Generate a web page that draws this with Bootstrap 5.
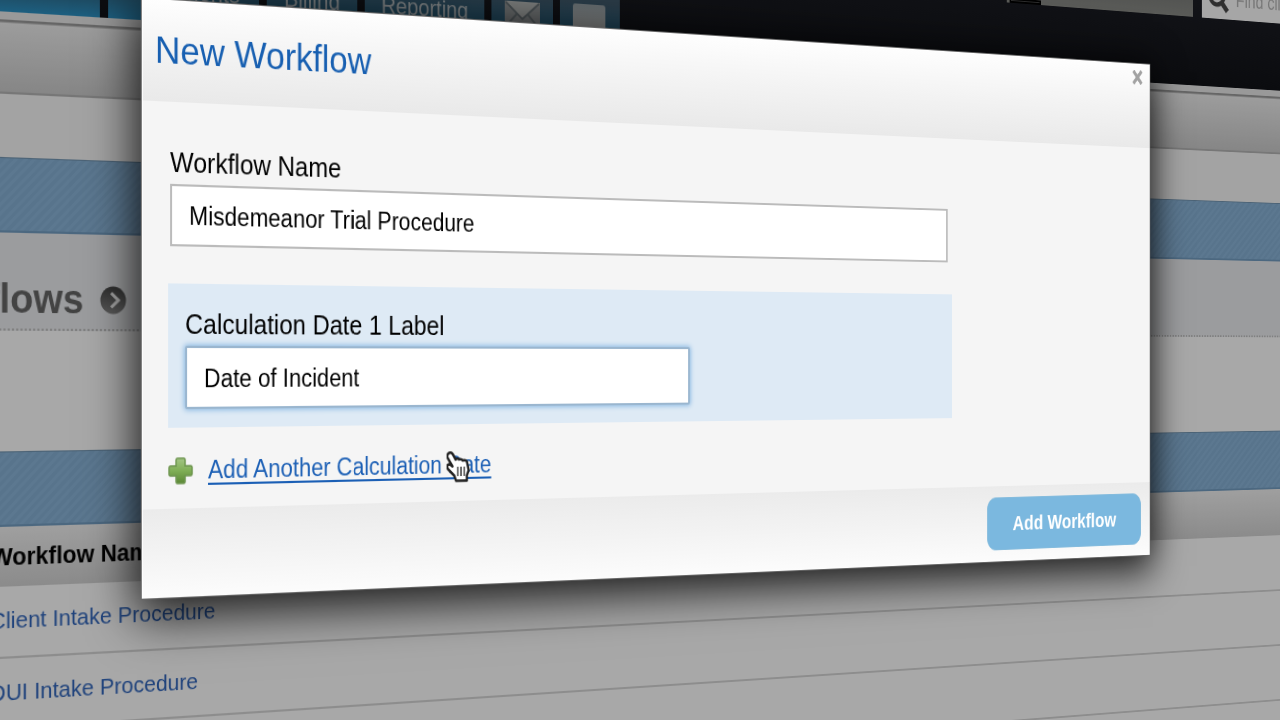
<!DOCTYPE html>
<html lang="en">
<head>
<meta charset="utf-8">
<meta name="viewport" content="width=device-width, initial-scale=1">
<title>New Workflow</title>
<link href="https://cdn.jsdelivr.net/npm/bootstrap@5.3.0/dist/css/bootstrap.min.css" rel="stylesheet">
<style>
  body { font-family: "Liberation Sans", Arial, sans-serif; background: #a8a8a8; color: #000; }

  /* The whole application lies on one plane that turns away to the right. */
  .stage { height: 100vh; perspective: 3234px; perspective-origin: 50% 50%; }
  .plane { width: 135vw; height: 120vh; margin: -10vh 0 0 -15vw; transform-origin: 65vw 50%; transform: rotateY(33deg); background: #a8a8a8; }

  /* Dimmed page */
  .topbar { height: 123px; background: linear-gradient(#14151a, #0b0c0f); }
  .tabs { gap: 8px; padding-left: 100px; }
  .tab { height: 57px; padding: 0 18px; font-size: 22px; color: #85898b; background: linear-gradient(#2b3c48 20%, #1f4356 60%, #1d5f80); text-decoration: none; }
  .tab-wide { width: 151px; }
  .tab-icon { padding: 0 15px; width: 70px; }
  .tools { gap: 13px; height: 46px; width: 424px; }
  .timer { width: 270px; background: linear-gradient(#4a4b4a, #5a5b58); }
  .timer span { width: 44px; height: 5px; margin-left: 4px; background: #2c2c2c; border: 2px solid #000; }
  .finder { width: 300px; padding-left: 8px; gap: 10px; background: #a6a6a6; margin-right: -160px; }
  .finder input { background: transparent; border: 0; padding: 0; font-size: 22px; width: 220px; color: #777; }
  .finder input::placeholder { color: #777; }
  .ribbon { height: 73px; border-top: 7px solid #999; border-bottom: 2px solid #777; background: linear-gradient(#666 0 2px, #9c9c9c 3px, #868686); }
  .spacer { height: 56px; background: #a3a3a3; }
  .band { height: 67px; border-top: 1px solid #4c6376; border-bottom: 2px solid #4c6880; background: repeating-linear-gradient(135deg, #5c7890 0 3px, #58748c 3px 6px); }
  .section { height: 87px; padding: 32px 0 0 54px; gap: 16px; background: #9b9c9e; border-bottom: 2px dotted #808080; }
  .section h2 { font-size: 36px; line-height: 42px; font-weight: 700; color: #434343; }
  .gap-lg { height: 107px; background: #a8a8a8; }
  .list { --bs-table-bg: transparent; }
  .list th { height: 53px; font-size: 22px; line-height: 24px; padding: 0 0 0 147px; vertical-align: middle; border: 0; background: linear-gradient(#9f9f9f, #8b8b8b); color: #000; }
  .list td { height: 63px; font-size: 21px; line-height: 24px; padding: 0 0 2px 146px; vertical-align: middle; border-bottom: 2px solid #8d8d8d; background: #a8a8a8; }
  .list a { color: #20437c; text-decoration: none; }

  /* Dialog */
  .overlay { padding: 103px 12.7% 0 16.9%; }
  .dialog { background: #f5f5f5; border-left: 1px solid #fff; box-shadow: 0 0 0 1px #666, 0 10px 44px 5px rgba(0,0,0,.88); }
  .dialog-head { height: 93px; padding: 19px 10px 0 12px; background: linear-gradient(#fefefe, #f3f3f3 50%, #e9e9e9); }
  .dialog-head h1 { font-size: 35px; line-height: 54px; color: #175fb1; font-weight: 400; }
  .shut { width: 16px; height: 16px; margin-top: -12px; line-height: 0; }
  .dialog-body { padding: 40px 280px 20px 25px; }
  .dialog-body label { font-size: 25px; line-height: 30px; margin-bottom: 5px; }
  .entry { height: 57px; border: 2px solid #bbb; border-radius: 0; padding: 2px 17px 0; font-size: 23px; color: #000; background: #fff; }
  .entry-on { width: 557px; height: 58px; border-color: #9ab6cf; border-radius: 2px; box-shadow: 0 0 5px 1px #8ab8e2; }
  .name-row { padding: 0 6px 0 2px; margin-bottom: 34px; }
  .date-box { background: #deeaf5; padding: 22px 17px 17px; margin-bottom: 24px; }
  .add-row { gap: 15px; font-size: 23px; line-height: 30px; }
  .add-row a { color: #1b5fb5; text-underline-offset: 4px; text-decoration-thickness: 2px; }
  .pointer { right: 24px; top: 2px; }
  .dialog-foot { height: 81px; padding: 0 13px; background: linear-gradient(#ebebeb, #f3f3f3 50%, #fcfcfc); }
  .go { width: 219px; height: 57px; border-radius: 12px; font-size: 22px; font-weight: 700; background: #7bb8df; color: #fff; border: 1px solid #86bcdd; padding: 0; }
</style>
</head>
<body class="overflow-hidden">
<div class="stage overflow-hidden">
  <div class="plane position-relative overflow-hidden">

    <header class="topbar d-flex justify-content-between align-items-end">
      <nav class="tabs d-flex">
        <a href="#" class="tab d-flex align-items-center tab-wide" aria-label="Activities"></a>
        <a href="#" class="tab d-flex align-items-center justify-content-center tab-wide">Documents</a>
        <a href="#" class="tab d-flex align-items-center">Billing</a>
        <a href="#" class="tab d-flex align-items-center">Reporting</a>
        <a href="#" class="tab tab-icon d-flex align-items-center" aria-label="Messages">
          <svg width="40" height="28" viewBox="0 0 40 28"><path fill="#66696a" d="M0 1h40v26H0z"/><path fill="#7d7f7e" d="M1 1h38L20 17z"/><path fill="none" stroke="#4a5154" stroke-width="2" d="M1 2l19 16L39 2M1 26l13-13M39 26L26 13"/></svg>
        </a>
        <a href="#" class="tab tab-icon d-flex align-items-center" aria-label="Notes">
          <svg width="38" height="30" viewBox="0 0 38 30"><defs><linearGradient id="note" x2="0" y2="1"><stop stop-color="#666d70"/><stop offset="1" stop-color="#8b8b89"/></linearGradient></defs><rect width="38" height="30" rx="3" fill="url(#note)"/></svg>
        </a>
      </nav>
      <div class="tools d-flex align-self-start">
        <div class="timer d-flex align-items-end flex-shrink-0"><span></span></div>
        <div class="finder d-flex align-items-center flex-shrink-0">
          <svg class="flex-shrink-0" width="34" height="38" viewBox="0 0 34 38"><circle cx="15" cy="15" r="11" fill="none" stroke="#2f2f2f" stroke-width="5"/><path stroke="#2f2f2f" stroke-width="6" d="M21 22l10 11"/></svg>
          <input type="search" placeholder="Find client or matter" aria-label="Find client or matter">
        </div>
      </div>
    </header>

    <main>
      <div class="ribbon"></div>
      <div class="spacer"></div>
      <div class="band"></div>
      <div class="section d-flex align-items-center">
        <h2 class="m-0">Workflows</h2>
        <svg width="26" height="26" viewBox="0 0 26 26"><defs><linearGradient id="disc" x2="0" y2="1"><stop stop-color="#2e2e2e"/><stop offset="1" stop-color="#5a5a5a"/></linearGradient></defs><circle cx="13" cy="13" r="12.5" fill="url(#disc)"/><path d="M11 6.500l7 6.500-7 6.500" fill="none" stroke="#a3a3a3" stroke-width="3"/></svg>
      </div>
      <div class="gap-lg"></div>
      <div class="band"></div>
      <table class="list table m-0">
        <thead><tr><th scope="col">Workflow Name</th></tr></thead>
        <tbody>
          <tr><td><a href="#">Client Intake Procedure</a></td></tr>
          <tr><td><a href="#">DUI Intake Procedure</a></td></tr>
          <tr><td></td></tr>
        </tbody>
      </table>
    </main>

    <div class="overlay position-absolute top-0 start-0 w-100">
      <form class="dialog" role="dialog" aria-labelledby="dialogTitle" onsubmit="return false">
        <div class="dialog-head d-flex justify-content-between align-items-start">
          <h1 id="dialogTitle" class="m-0">New Workflow</h1>
          <button type="button" class="shut btn p-0 border-0" aria-label="Close">
            <svg width="16" height="16" viewBox="0 0 16 16"><path d="M2 1l12 14M14 1L2 15" stroke="#a2a2a2" stroke-width="4"/></svg>
          </button>
        </div>
        <div class="dialog-body">
          <div class="name-row">
            <label class="d-block" for="wfName">Workflow Name</label>
            <input id="wfName" type="text" class="entry form-control" value="Misdemeanor Trial Procedure">
          </div>
          <div class="date-box">
            <label class="d-block" for="wfDate">Calculation Date 1 Label</label>
            <input id="wfDate" type="text" class="entry entry-on form-control" value="Date of Incident">
          </div>
          <div class="add-row d-flex align-items-center">
            <svg width="25" height="25" viewBox="0 0 25 25"><defs><linearGradient id="leaf" x2="0" y2="1"><stop stop-color="#a3c585"/><stop offset=".5" stop-color="#7fae55"/><stop offset="1" stop-color="#5a8735"/></linearGradient></defs><path d="M9.500 1h6q1.500 0 1.500 1.500V8h5.500Q24 8 24 9.500v6q0 1.500-1.500 1.500H17v5.500q0 1.500-1.500 1.500h-6Q8 24 8 22.500V17H2.500Q1 17 1 15.500v-6Q1 8 2.500 8H8V2.500Q8 1 9.500 1z" fill="url(#leaf)" stroke="#6f9650" stroke-width="1.500"/></svg>
            <div class="position-relative">
              <a href="#">Add Another Calculation Date</a>
              <svg class="pointer position-absolute" width="26" height="30" viewBox="0 0 26 30"><path d="M2 2q3-2 5 1l3 5q2-2 4 0 2-1 4 1 3-1 4.500 1l2 8.500-2 5v5H10.500l-2-5-7-6.500q-2-4 1-4.500 2 0 4 2L1 6q-1-2 1-4z" fill="#fff" stroke="#222" stroke-width="2.500" stroke-linejoin="round"/><path d="M12.500 15v9M16 15v9M19.500 15v9" stroke="#333" stroke-width="1.500"/></svg>
            </div>
          </div>
        </div>
        <div class="dialog-foot d-flex align-items-center justify-content-end">
          <button type="submit" class="go btn">Add Workflow</button>
        </div>
      </form>
    </div>

  </div>
</div>
<script src="https://cdn.jsdelivr.net/npm/bootstrap@5.3.0/dist/js/bootstrap.bundle.min.js"></script>
</body>
</html>
